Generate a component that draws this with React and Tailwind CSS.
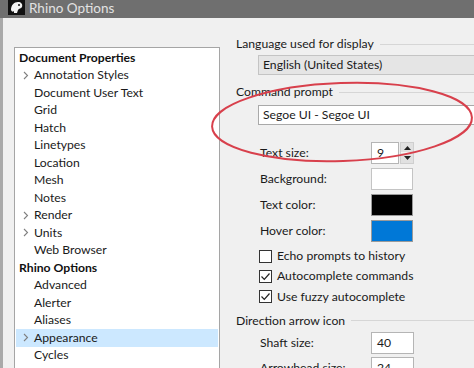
import React from "react";

const treeItems = [
  { t: "Document Properties", h: true },
  { t: "Annotation Styles", c: true },
  { t: "Document User Text" },
  { t: "Grid" },
  { t: "Hatch" },
  { t: "Linetypes" },
  { t: "Location" },
  { t: "Mesh" },
  { t: "Notes" },
  { t: "Render", c: true },
  { t: "Units", c: true },
  { t: "Web Browser" },
  { t: "Rhino Options", h: true },
  { t: "Advanced" },
  { t: "Alerter" },
  { t: "Aliases" },
  { t: "Appearance", c: true, sel: true },
  { t: "Cycles" },
];

function Chevron() {
  return (
    <svg width="6" height="9" viewBox="0 0 6 9" className="shrink-0">
      <path d="M1 1 L4.5 4.5 L1 8" fill="none" stroke="#808080" strokeWidth="1.1" />
    </svg>
  );
}

function GroupHead({ text }) {
  return (
    <div className="flex items-center h-[16px]">
      <span className="whitespace-nowrap">{text}</span>
      <div className="flex-1 h-px bg-[#d6d6d6] ml-[6px]" />
    </div>
  );
}

function Check({ checked }) {
  return (
    <div className="w-[13px] h-[13px] border border-[#333] bg-white flex items-center justify-center shrink-0">
      {checked && (
        <svg width="11" height="11" viewBox="0 0 11 11">
          <path d="M1.5 5.5 L4.3 8.3 L9.5 2.5" fill="none" stroke="#222" strokeWidth="1.2" />
        </svg>
      )}
    </div>
  );
}

function Row({ label, children, top }) {
  return (
    <div className={`flex items-center ${top}`}>
      <div className="w-[135px] pl-[24px] whitespace-nowrap">{label}</div>
      {children}
    </div>
  );
}

export default function App() {
  return (
    <div
      className="relative w-[474px] h-[368px] overflow-hidden bg-[#f0f0f0] text-[#1a1a1a] text-[12.2px]"
      style={{ fontFamily: 'Lato, "Noto Sans", sans-serif' }}
    >
      {/* Title bar */}
      <div className="h-[18px] bg-[#6f6f6f] flex items-center pl-[8px]">
        <svg width="17" height="16" viewBox="0 0 17 16" className="-mt-[4px]">
          <rect x="0" y="0" width="17" height="16" fill="#111" />
          <path d="M3 11 C3 6 6 3 10 3 C13 3 15 5 14 8 C13 10 11 9 10 11 L9 14 L6 14 L6 12 C5 13 4 13 3 11 Z" fill="#f2f2f2" />
          <circle cx="11" cy="6" r="1" fill="#111" />
        </svg>
        <span className="ml-[4px] text-[13.5px] leading-[18px] text-[#e2e2e2] -mt-[3px]">Rhino Options</span>
      </div>

      <div className="flex h-[350px]">
        <div className="w-[3px] bg-[#a9a9a9]" />
        {/* Tree */}
        <div className="ml-[11px] mt-[29px] w-[206px] border border-[#a5a5a5] bg-white pt-[1px] pl-[1px] pr-[1px] self-start h-[340px]">
          {treeItems.map((it) => (
            <div
              key={it.t}
              className={`h-[17.5px] flex items-center ${it.sel ? "bg-[#cce8ff]" : ""}`}
            >
              {it.h ? (
                <span className="pl-[3px] font-bold text-[#111]">{it.t}</span>
              ) : (
                <>
                  <div className="w-[18px] flex justify-end pr-[5px]">{it.c && <Chevron />}</div>
                  <span>{it.t}</span>
                </>
              )}
            </div>
          ))}
        </div>

        {/* Right panel */}
        <div className="flex-1 ml-[16px] flex flex-col">
          <div className="mt-[18px]">
            <GroupHead text="Language used for display" />
          </div>
          <div className="ml-[22px] mt-[3px] h-[21px] bg-[#e5e5e5] border border-[#c4c4c4] border-r-0 flex items-center pl-[4px]">
            English (United States)
          </div>
          <div className="mt-[9px]">
            <GroupHead text="Command prompt" />
          </div>
          <div className="ml-[22px] mt-[5px] h-[20px] bg-white border border-[#a9a9a9] border-r-0 flex items-center pl-[4px]">
            Segoe UI - Segoe UI
          </div>
          <Row label="Text size:" top="mt-[17px]">
            <div className="flex h-[22px]">
              <div className="w-[28px] h-[22px] bg-white border border-[#b5b5b5] flex items-center pl-[5px]">9</div>
              <div className="w-[14px] h-[22px] flex flex-col ml-[1px] border border-[#cfcfcf]">
                <div className="h-[10px] bg-[#e1e1e1] flex items-center justify-center border-b border-[#f6f6f6]">
                  <svg width="7" height="4" viewBox="0 0 7 4"><path d="M0 4 L3.5 0 L7 4Z" fill="#222" /></svg>
                </div>
                <div className="h-[10px] bg-[#e1e1e1] flex items-center justify-center">
                  <svg width="7" height="4" viewBox="0 0 7 4"><path d="M0 0 L3.5 4 L7 0Z" fill="#222" /></svg>
                </div>
              </div>
            </div>
          </Row>
          <Row label="Background:" top="mt-[4px]">
            <div className="w-[42px] h-[22px] bg-white border border-[#c4c4c4]" />
          </Row>
          <Row label="Text color:" top="mt-[4px]">
            <div className="w-[42px] h-[22px] bg-black border border-[#9a9a9a]" />
          </Row>
          <Row label="Hover color:" top="mt-[4px]">
            <div className="w-[42px] h-[22px] bg-[#0078d7] border border-[#9a9a9a]" />
          </Row>
          <div className="mt-[4px] ml-[23px] flex flex-col">
            <div className="h-[20.2px] flex items-center gap-[5px]"><Check /><span>Echo prompts to history</span></div>
            <div className="h-[20.2px] flex items-center gap-[5px]"><Check checked /><span>Autocomplete commands</span></div>
            <div className="h-[20.2px] flex items-center gap-[5px]"><Check checked /><span>Use fuzzy autocomplete</span></div>
          </div>
          <div className="mt-[6px]">
            <GroupHead text="Direction arrow icon" />
          </div>
          <Row label="Shaft size:" top="mt-[3px]">
            <div className="w-[43px] h-[22px] bg-white border border-[#b5b5b5] flex items-center pl-[5px]">40</div>
          </Row>
          <Row label="Arrowhead size:" top="mt-[3px]">
            <div className="w-[43px] h-[22px] bg-white border border-[#b5b5b5] flex items-center pl-[5px]">24</div>
          </Row>
        </div>
      </div>

      {/* Red annotation ellipse */}
      <svg className="absolute left-0 top-0 pointer-events-none" width="474" height="368">
        <ellipse cx="342" cy="122" rx="130" ry="39" fill="none" stroke="#d8404c" strokeWidth="2" transform="rotate(-2 342 122)" />
      </svg>
    </div>
  );
}
